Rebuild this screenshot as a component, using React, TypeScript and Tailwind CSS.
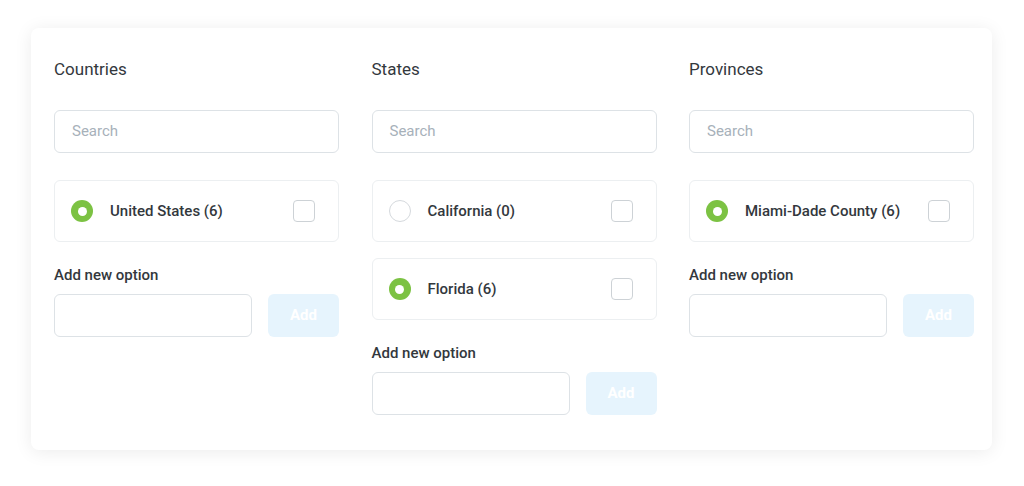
import React from "react";

type Opt = { label: string; selected: boolean };

function Radio({ on }: { on: boolean }) {
  return on ? (
    <span className="flex h-[22px] w-[22px] shrink-0 items-center justify-center rounded-full bg-[#7cc243]">
      <span className="h-[9px] w-[9px] rounded-full bg-white" />
    </span>
  ) : (
    <span className="h-[22px] w-[22px] shrink-0 rounded-full border border-[#d5d9dd] bg-white" />
  );
}

function Column({ title, options }: { title: string; options: Opt[] }) {
  return (
    <div className="flex w-[285px] flex-col">
      <h2 className="h-[24px] text-[17px] leading-[24px] text-[#33383d]">{title}</h2>
      <div className="mt-[29px] flex h-[43px] items-center rounded-[6px] border border-[#dde2e6] px-[17px] text-[15px] text-[#a7b1ba]">
        Search
      </div>
      <div className="mt-[27px] flex flex-col gap-[16px]">
        {options.map((o) => (
          <div
            key={o.label}
            className="flex h-[62px] items-center rounded-[6px] border border-[#eceff1] pl-[16px] pr-[23px]"
          >
            <Radio on={o.selected} />
            <span className="ml-[17px] flex-1 text-[15px] font-medium text-[#33383d]">{o.label}</span>
            <span className="h-[22px] w-[22px] rounded-[4px] border border-[#cdd2d6]" />
          </div>
        ))}
      </div>
      <div className="mt-[23px] text-[15px] font-medium leading-[20px] text-[#33383d]">Add new option</div>
      <div className="mt-[9px] flex items-center justify-between">
        <div className="h-[43px] w-[198px] rounded-[6px] border border-[#dde2e6] bg-white" />
        <button className="h-[43px] w-[71px] rounded-[6px] bg-[#e6f4fd] text-[15px] font-bold text-white">
          Add
        </button>
      </div>
    </div>
  );
}

export default function App() {
  return (
    <div
      className="h-[486px] w-[1024px] bg-white pl-[31px] pt-[28px]"
      style={{ fontFamily: "Roboto, 'Liberation Sans', sans-serif" }}
    >
      <div className="flex h-[422px] w-[961px] gap-[32.5px] rounded-[8px] bg-white pl-[23px] pt-[29px] shadow-[0_2px_18px_rgba(0,0,0,0.08)]">
        <Column title="Countries" options={[{ label: "United States (6)", selected: true }]} />
        <Column
          title="States"
          options={[
            { label: "California (0)", selected: false },
            { label: "Florida (6)", selected: true },
          ]}
        />
        <Column title="Provinces" options={[{ label: "Miami-Dade County (6)", selected: true }]} />
      </div>
    </div>
  );
}
